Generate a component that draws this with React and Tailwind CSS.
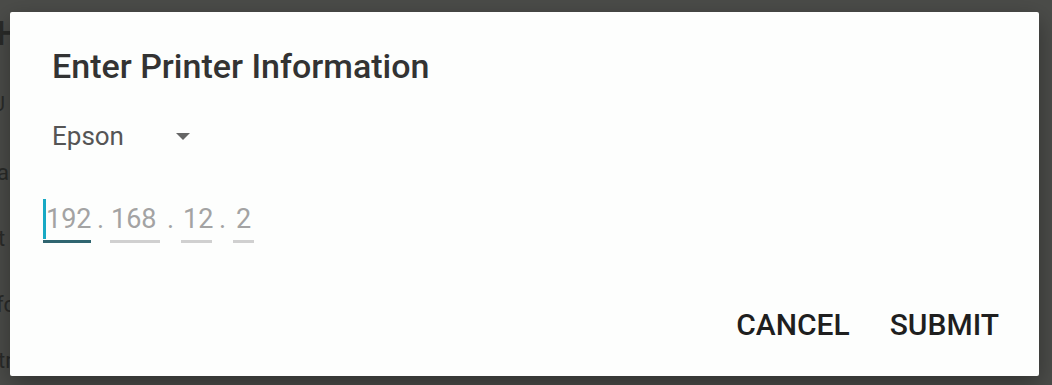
import React from "react";

const font = { fontFamily: "Roboto, 'Noto Sans', Arial, sans-serif" };

function Field({ text, width, pl, active }) {
  return (
    <div className="relative flex flex-col" style={{ width }}>
      {active && (
        <div className="absolute left-0 top-[-7px] h-[40px] w-[3px] bg-[#18a9c4]" />
      )}
      <div
        className="text-[27px] leading-[27px] text-[#a3a3a3] whitespace-nowrap"
        style={{ paddingLeft: pl }}
      >
        {text}
      </div>
      <div
        className={
          active
            ? "mt-[7px] h-[3px] w-full bg-[#2f6570]"
            : "mt-[7px] h-[3px] w-full bg-[#d0d0d0]"
        }
      />
    </div>
  );
}

function Dot({ wide }) {
  return (
    <div
      className={
        wide
          ? "w-[21px] self-start text-center text-[27px] leading-[27px] text-[#a3a3a3]"
          : "w-[19px] self-start text-center text-[27px] leading-[27px] text-[#a3a3a3]"
      }
    >
      .
    </div>
  );
}

export default function App() {
  return (
    <div
      className="relative h-[385px] w-[1052px] overflow-hidden bg-[#4b4c49]"
      style={font}
    >
      {/* underlying page, mostly covered by the dialog */}
      <div className="flex flex-col text-[#2a2b29]">
        <div className="ml-[-4px] mt-[16px] text-[34px] font-bold leading-[34px]">H</div>
        <div className="ml-[-8px] mt-[44px] text-[20px] leading-[20px]">U</div>
        <div className="ml-[-3px] mt-[48px] text-[22px] leading-[22px]">a</div>
        <div className="ml-[-2px] mt-[44px] text-[22px] leading-[22px]">t</div>
        <div className="ml-[-4px] mt-[44px] text-[22px] leading-[22px]">fc</div>
        <div className="ml-[-2px] mt-[34px] text-[22px] leading-[22px]">tr</div>
      </div>

      {/* dialog */}
      <div className="absolute left-[10px] top-[12px] flex h-[364px] w-[1029px] flex-col rounded-[2px] bg-[#fdfefd] pl-[42px] pr-[40px] pt-[37px] pb-[36px] shadow-[0_8px_24px_rgba(0,0,0,0.35)]">
        <div className="text-[34px] font-medium leading-[34px] text-[#333333]">
          Enter Printer Information
        </div>

        <div className="mt-[40px] flex items-center">
          <span className="text-[26px] leading-[26px] text-[#555555]">Epson</span>
          <svg
            className="ml-[52px]"
            width="14"
            height="7"
            viewBox="0 0 14 7"
          >
            <path d="M0 0 L14 0 L7 7 Z" fill="#666666" />
          </svg>
        </div>

        <div className="ml-[-9px] mt-[57px] flex items-start">
          <Field text="192" width={48} pl={3} active />
          <Dot />
          <Field text="168" width={50} pl={1} />
          <Dot wide />
          <Field text="12" width={31} pl={2} />
          <Dot wide />
          <Field text="2" width={21} pl={3} />
        </div>

        <div className="mt-auto flex items-end justify-end gap-[40px]">
          <button className="text-[30px] font-medium leading-[30px] text-[#1f1f1f]">
            CANCEL
          </button>
          <button className="text-[30px] font-medium leading-[30px] text-[#1f1f1f]">
            SUBMIT
          </button>
        </div>
      </div>
    </div>
  );
}
